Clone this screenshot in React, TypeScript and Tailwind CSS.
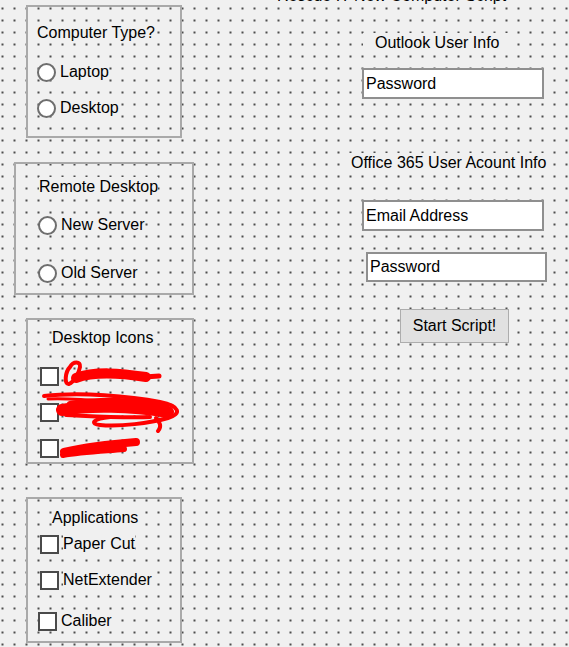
import React from 'react'

const Radio = ({ label, className }: { label: string; className?: string }) => (
  <div className={`flex items-center h-[20px] gap-[4px] ${className ?? ''}`}>
    <span className="w-[19px] h-[19px] rounded-full border-2 border-[#6e6e6e] bg-white shrink-0" />
    <span className="bg-[#f0f0f0] leading-[20px]">{label}</span>
  </div>
)

const Check = ({ label, className }: { label?: string; className?: string }) => (
  <div className={`flex items-center h-[20px] gap-[4px] ${className ?? ''}`}>
    <span className="w-[19px] h-[19px] border-2 border-[#4a4a4a] bg-white shrink-0" />
    {label && <span className="bg-[#f0f0f0] leading-[20px]">{label}</span>}
  </div>
)

const TextBox = ({ value, className }: { value: string; className?: string }) => (
  <div
    className={`flex items-center border-2 border-[#8f8f8f] bg-white pl-[2px] leading-[20px] ${className ?? ''}`}
  >
    {value}
  </div>
)

// red marker over the blanked out desktop icon names
const Scribbles = () => (
  <svg
    className="absolute -left-[2px] -top-[2px] overflow-visible pointer-events-none"
    width="168"
    height="146"
    viewBox="26 318 168 146"
    fill="none"
    stroke="#ff0000"
    strokeLinecap="round"
    strokeLinejoin="round"
  >
    <path d="M70 367 C73 361 81 361 80 367 C79 373 74 382 69 384 C64 385 65 372 70 367 Z" strokeWidth="4" />
    <path d="M76 378 C95 371 120 373 146 377" strokeWidth="10" />
    <path d="M140 377 C148 377 154 376 159 376" strokeWidth="5" />
    <path d="M44 396 C80 392 130 396 160 402 C180 406 182 414 168 418 C150 423 120 427 100 425 C90 424 92 419 110 417" strokeWidth="4" />
    <path d="M48 399 C70 398 90 400 110 402" strokeWidth="3" />
    <path d="M62 410 C90 405 130 406 168 412" strokeWidth="12" />
    <path d="M70 404 C100 399 140 400 164 406" strokeWidth="6" />
    <path d="M66 415 C90 416 120 418 150 417" strokeWidth="4" />
    <path d="M156 418 C160 422 162 427 158 431" strokeWidth="4" />
    <path d="M64 452 C85 447 110 444 136 442" strokeWidth="8" />
    <path d="M63 455 C80 452 100 451 124 449" strokeWidth="6" />
  </svg>
)

export default function App() {
  return (
    <div className="w-full h-[647px] overflow-hidden flex bg-[#f0f0f0] bg-[radial-gradient(circle,#4a4a4a_0.7px,transparent_1.2px)] bg-[length:12px_12px] bg-[position:-3.5px_2.5px] font-['Liberation_Sans',Arial,sans-serif] text-[16px] text-black">
      <div className="w-[200px] shrink-0 flex flex-col">
        <div className="ml-[26px] mt-[5px] w-[156px] h-[133px] border-2 border-[#a9a9a9] flex flex-col items-start">
          <span className="mt-[16px] ml-[9px] leading-[20px] bg-[#f0f0f0]">Computer Type?</span>
          <Radio label="Laptop" className="mt-[19px] ml-[9px]" />
          <Radio label="Desktop" className="mt-[16px] ml-[9px]" />
        </div>

        <div className="ml-[14px] mt-[24px] w-[180px] h-[133px] border-2 border-[#a9a9a9] flex flex-col items-start">
          <span className="mt-[13px] ml-[23px] leading-[20px] bg-[#f0f0f0]">Remote Desktop</span>
          <Radio label="New Server" className="mt-[18px] ml-[22px]" />
          <Radio label="Old Server" className="mt-[28px] ml-[22px]" />
        </div>

        <div className="relative ml-[26px] mt-[23px] w-[168px] h-[146px] border-2 border-[#a9a9a9] flex flex-col items-start">
          <span className="mt-[8px] ml-[24px] leading-[20px] bg-[#f0f0f0]">Desktop Icons</span>
          <Check className="mt-[18px] ml-[12px]" />
          <Check className="mt-[16px] ml-[12px]" />
          <Check className="mt-[16px] ml-[12px]" />
          <Scribbles />
        </div>

        <div className="ml-[26px] mt-[33px] w-[156px] h-[146px] border-2 border-[#a9a9a9] flex flex-col items-start">
          <span className="mt-[9px] ml-[24px] leading-[20px] bg-[#f0f0f0]">Applications</span>
          <Check label="Paper Cut" className="mt-[6px] ml-[12px]" />
          <Check label="NetExtender" className="mt-[16px] ml-[12px]" />
          <Check label="Caliber" className="mt-[21px] ml-[10px]" />
        </div>
      </div>

      <div className="flex flex-col items-start">
        <span className="ml-[77px] mt-[-14px] leading-[20px] bg-[#f0f0f0]">Rescue IT New Computer Script</span>
        <span className="ml-[163px] mt-[27px] pl-[12px] pr-[8px] leading-[20px] bg-[#f0f0f0]">Outlook User Info</span>
        <TextBox value="Password" className="ml-[162px] mt-[15px] w-[182px] h-[31px]" />
        <span className="ml-[143px] mt-[54px] pl-[8px] pr-[2px] leading-[20px] bg-[#f0f0f0]">Office 365 User Acount Info</span>
        <TextBox value="Email Address" className="ml-[162px] mt-[27px] w-[182px] h-[31px]" />
        <TextBox value="Password" className="ml-[166px] mt-[21px] w-[181px] h-[30px]" />
        <button className="ml-[200px] mt-[27px] w-[109px] h-[34px] border border-[#adadad] bg-[#e1e1e1] leading-[20px]">
          Start Script!
        </button>
      </div>
    </div>
  )
}
